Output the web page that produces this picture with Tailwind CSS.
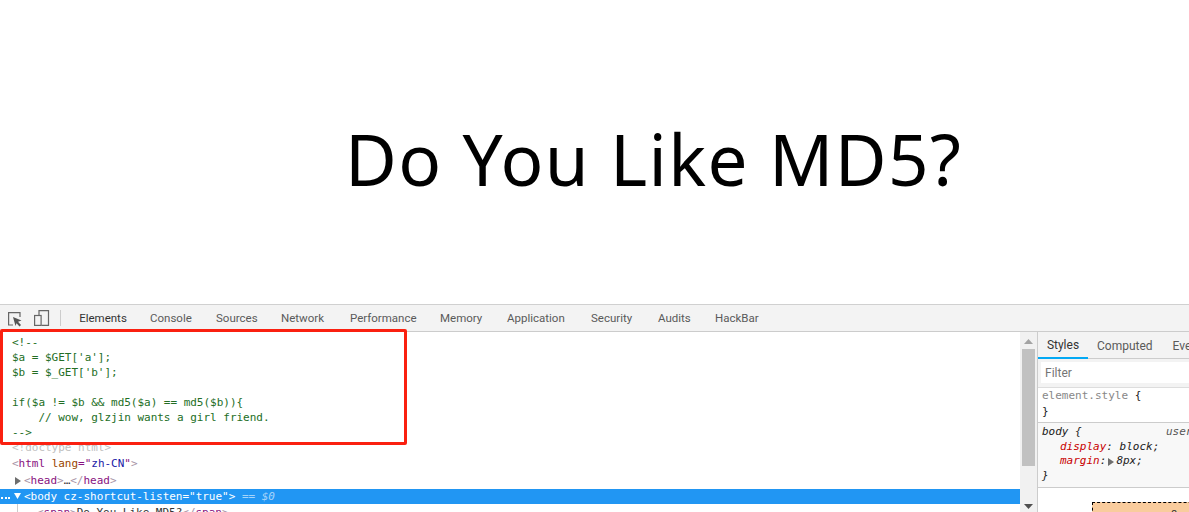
<!DOCTYPE html>
<html><head><meta charset="utf-8"><script src="https://cdn.jsdelivr.net/npm/@tailwindcss/browser@4"></script></head>
<body class="m-0 bg-white overflow-hidden">
<div class="relative w-[1189px] h-[512px] overflow-hidden flex flex-col bg-white">
  <div class="h-[304px] shrink-0 pl-[345px] pt-[117px]">
    <h1 class="m-0 font-normal text-[71px] leading-[84px] tracking-[1.4px] text-black whitespace-nowrap font-['Noto_Sans',sans-serif]">Do You Like MD5?</h1>
  </div>
  <div class="flex-1 flex flex-col border-t border-[#d0d0d0] min-h-0">
    <div class="h-[27px] shrink-0 bg-[#f3f3f3] border-b border-[#ccc] flex items-center text-[11.5px] text-[#5a5a5a] font-['Roboto',sans-serif]">
      <svg class="ml-[8px] w-[14px] h-[15px] shrink-0 mt-[2px]" viewBox="0 0 14 15" fill="none"><path d="M5 13H.6V.6H12V5" stroke="#666" stroke-width="1.2"/><path d="M5 5l8.5 3.5-3.5 1.2 3 3.3-1.5 1.5-3-3.3L7.5 14z" fill="#555"/></svg>
      <svg class="ml-[12px] w-[16px] h-[16px] shrink-0" viewBox="0 0 16 16" fill="none" stroke="#666" stroke-width="1.2"><path d="M5 5.5V.6h9.5v14.8H7.500"/><rect x=".6" y="5.500" width="6.500" height="9.900"/></svg>
      <div class="ml-[10px] w-px h-[16px] bg-[#ccc]"></div>
      <div class="ml-[7px] relative h-[26px] w-[70px] flex items-center justify-center text-[#333] pt-[2px]">Elements<div class="absolute left-0 right-0 -bottom-px h-[2px] bg-[#3b87d8]"></div></div>
      <div class="flex items-center ml-[12px] pt-[2px] whitespace-nowrap">
        <span class="w-[66px]">Console</span><span class="w-[65px]">Sources</span><span class="w-[69px]">Network</span><span class="w-[90px]">Performance</span><span class="w-[67px]">Memory</span><span class="w-[84px]">Application</span><span class="w-[67px]">Security</span><span class="w-[57px]">Audits</span><span>HackBar</span>
      </div>
    </div>
    <div class="flex-1 flex min-h-0">
      <div class="w-[1020px] shrink-0 pt-[3px] overflow-hidden text-[11px] leading-[15px] tracking-[-0.02px] font-['DejaVu_Sans_Mono',monospace] text-[#236e25] [&>div]:whitespace-pre">
        <div class="pl-[12px]">&lt;!--</div>
        <div class="pl-[12px]">$a = $GET['a'];</div>
        <div class="pl-[12px]">$b = $_GET['b'];</div>
        <div class="pl-[12px]">&nbsp;</div>
        <div class="pl-[12px]">if($a != $b &amp;&amp; md5($a) == md5($b)){</div>
        <div class="pl-[12px]">    // wow, glzjin wants a girl friend.</div>
        <div class="pl-[12px]">--&gt;</div>
        <div class="pl-[12px] h-[16px] leading-[16px] text-[#c0c0c0]">&lt;!doctype html&gt;</div>
        <div class="pl-[12px] h-[16px] leading-[16px]"><span class="text-[#a894a6]">&lt;</span><span class="text-[#881280]">html</span> <span class="text-[#994500]">lang</span><span class="text-[#881280]">="</span><span class="text-[#1a1aa6]">zh-CN</span><span class="text-[#881280]">"</span><span class="text-[#a894a6]">&gt;</span></div>
        <div class="pl-[15px] h-[17px] leading-[16px] flex items-center"><svg class="w-[6px] h-[8px] mr-[3px] shrink-0" viewBox="0 0 6 8"><path d="M0 0l6 4-6 4z" fill="#6e6e6e"/></svg><span class="text-[#a894a6]">&lt;</span><span class="text-[#881280]">head</span><span class="text-[#a894a6]">&gt;</span><span class="text-[#333]">…</span><span class="text-[#a894a6]">&lt;/</span><span class="text-[#881280]">head</span><span class="text-[#a894a6]">&gt;</span></div>
        <div class="h-[15px] bg-[#2196f3] text-white flex items-center"><div class="w-[14px] flex gap-[1.5px] pl-[1px] mt-[2px] shrink-0"><div class="w-[2px] h-[2px] bg-white"></div><div class="w-[2px] h-[2px] bg-white"></div><div class="w-[2px] h-[2px] bg-white"></div></div><svg class="w-[7px] h-[6px] mr-[3px] -mt-[2px] shrink-0" viewBox="0 0 7 6"><path d="M0 0h7l-3.500 6z" fill="#fff"/></svg><span>&lt;body cz-shortcut-listen="true"&gt;</span><span class="text-white/60"> == <i>$0</i></span></div>
        <div class="pl-[37px] relative mt-[1px] leading-[16px]"><span class="text-[#a894a6]">&lt;</span><span class="text-[#881280]">span</span><span class="text-[#a894a6]">&gt;</span><span class="text-[#333]">Do You Like MD5?</span><span class="text-[#a894a6]">&lt;/</span><span class="text-[#881280]">span</span><span class="text-[#a894a6]">&gt;</span><div class="absolute left-[17px] -top-px w-px h-[20px] bg-[#ccc]"></div></div>
      </div>
      <div class="w-[17px] shrink-0 bg-[#f1f1f1] flex flex-col items-center pt-[7px]">
        <svg class="w-[9px] h-[5px] shrink-0" viewBox="0 0 9 5"><path d="M4.500 0L9 5H0z" fill="#a3a3a3"/></svg>
        <div class="w-[13px] h-[117px] bg-[#c1c1c1] mt-[5px]"></div>
        <div class="flex-1"></div>
        <svg class="w-[9px] h-[5px] shrink-0 mb-[3px]" viewBox="0 0 9 5"><path d="M0 0h9L4.500 5z" fill="#505050"/></svg>
      </div>
      <div class="flex-1 min-w-0 border-l border-[#ccc] bg-white overflow-hidden">
        <div class="h-[27px] bg-[#f3f3f3] border-b border-[#ccc] flex text-[12px] text-[#5a5a5a] font-['Roboto',sans-serif] whitespace-nowrap pt-[1px]">
          <div class="w-[50px] h-[26px] border-b-2 border-[#03a9f4] flex items-center justify-center text-[#333] shrink-0">Styles</div>
          <div class="ml-[9px] flex items-center">Computed</div>
          <div class="ml-[20px] flex items-center">Event Listeners</div>
        </div>
        <div class="h-[29px] bg-[#f3f3f3] border-b border-[#ddd] pt-[3px] pl-[3px]">
          <div class="h-[21px] bg-white pl-[4px] text-[12px] leading-[22px] text-[#757575] font-['Roboto',sans-serif]">Filter</div>
        </div>
        <div class="h-[35px] border-b border-[#ccc] pl-[4px] font-['DejaVu_Sans_Mono',monospace] text-[11px] leading-[15.5px] text-[#222]">
          <div><span class="text-[#888]">element.style</span> {</div><div>}</div>
        </div>
        <div class="h-[65px] border-b border-[#ccc] bg-[#f8f8f8] pl-[4px] pt-[2px] font-['DejaVu_Sans_Mono',monospace] text-[11px] leading-[14.7px] text-[#222] italic whitespace-nowrap">
          <div class="flex"><span class="w-[124px] shrink-0">body {</span><span class="text-[#555]">user agent</span></div>
          <div class="pl-[18px]"><span class="text-[#c80000]">display</span>: block;</div>
          <div class="pl-[18px] flex items-center"><span class="text-[#c80000]">margin</span>:<svg class="w-[6px] h-[8px] mx-[2px] shrink-0" viewBox="0 0 6 8"><path d="M0 0l6 4-6 4z" fill="#6e6e6e"/></svg>8px;</div>
          <div>}</div>
        </div>
        <div class="ml-[54px] mt-[14px] h-[20px] w-[120px] bg-[#f9cc9d] border border-dashed border-black text-[11px] font-['Roboto',sans-serif] leading-[16px] pl-[78px] pt-[4px] text-[#333]">8</div>
      </div>
    </div>
  </div>
  <div class="absolute left-0 top-[329px] w-[407px] h-[116px] border-[3px] border-[#fa2010] rounded-[2px]"></div>
</div>
</body></html>
